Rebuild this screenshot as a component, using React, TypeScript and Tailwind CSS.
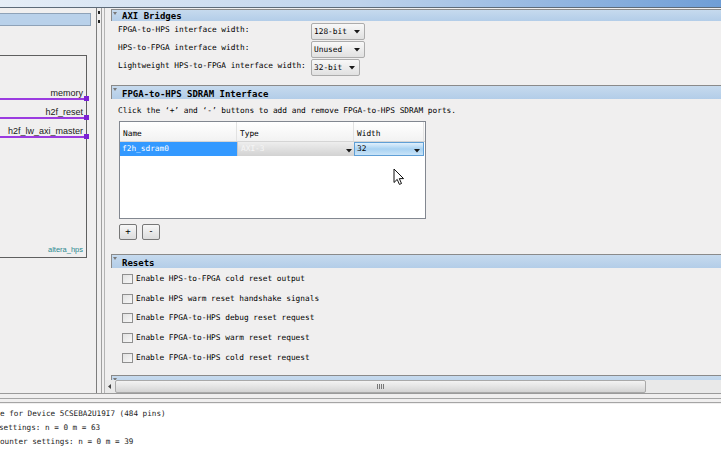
import React from "react";

const mono = "font-['DejaVu_Sans_Mono','Liberation_Mono',monospace]";

const Caret = ({ className = "" }: { className?: string }) => (
    <svg width="6" height="4" viewBox="0 0 6 4" className={className}>
        <polygon points="0,0 6,0 3,3.5" fill="#1a1a1a" />
    </svg>
);

const SectionHeader = ({ title, tall = true }: { title: string; tall?: boolean }) => (
    <div
        className={`ml-[6px] shrink-0 overflow-hidden border-t border-l border-[#8a8a8a] bg-gradient-to-b from-[#c6daee] to-[#b3cde8] flex items-start ${
            tall ? "h-[14px]" : "h-[12px]"
        }`}
    >
        <svg width="4" height="3" viewBox="0 0 4 3" className="ml-[1px] mt-[2px] shrink-0">
            <polygon points="0,0 4,0 2,3" fill="#7a7a7a" />
        </svg>
        <span
            className={`ml-[5px] text-[9px] font-bold leading-[10px] text-black ${tall ? "pt-[3px]" : "pt-[1px]"}`}
        >
            {title}
        </span>
    </div>
);

const Select = ({ value, width }: { value: string; width: string }) => (
    <div
        className={`${width} h-[17px] flex items-center justify-between pl-[2px] pr-[4px] border border-[#acacac] rounded-[2px] bg-gradient-to-b from-[#f8f8f8] to-[#e1e1e1]`}
    >
        <span>{value}</span>
        <Caret />
    </div>
);

const Port = ({ label }: { label: string }) => (
    <div className="flex flex-col">
        <div className="h-[11px] leading-[11px] text-right pr-[3px] text-[9px] text-[#1a1a1a] font-['Liberation_Sans',sans-serif]">
            {label}
        </div>
        <div className="h-[5px] -mt-[3px] flex items-center -mr-[3px]">
            <div className="flex-1 h-[2px] bg-[#9b3be0]" />
            <div className="w-[5px] h-[5px] bg-[#7b22d4]" />
        </div>
    </div>
);

const resets = [
    "Enable HPS-to-FPGA cold reset output",
    "Enable HPS warm reset handshake signals",
    "Enable FPGA-to-HPS debug reset request",
    "Enable FPGA-to-HPS warm reset request",
    "Enable FPGA-to-HPS cold reset request",
];

export default function App() {
    return (
        <div className={`w-[721px] h-[453px] overflow-hidden bg-[#f0efef] flex flex-col ${mono}`}>
            {/* title strip */}
            <div className="h-[8px] shrink-0 border-b border-[#5d6b79] bg-gradient-to-r from-[#e6eef7] via-[#bed3ec] to-[#6f9ed6]" />

            <div className="h-[386px] shrink-0 flex border-b border-[#9a9a9a]">
                {/* system view */}
                <div className="w-[97px] shrink-0 border-r border-[#7c7c7c] pt-[5px] flex flex-col">
                    <div className="h-[13px] mr-[5px] border-t border-b border-r border-[#8ea2b8] bg-[#b9d1ea]" />
                    <div className="mt-[29px] w-[87px] h-[203px] border-t border-r border-b border-[#5f5f5f] pt-[32px] flex flex-col gap-[6px]">
                        <Port label="memory" />
                        <Port label="h2f_reset" />
                        <Port label="h2f_lw_axi_master" />
                        <div className="mt-auto mb-[3px] pr-[3px] text-right text-[7.5px] leading-[9px] text-[#2b8a8f] font-['Liberation_Sans',sans-serif]">
                            altera_hps
                        </div>
                    </div>
                </div>

                {/* splitter */}
                <div className="w-[4px] shrink-0 flex flex-col items-center pt-[3px]">
                    <div className="w-[2px] h-[3px] bg-[#222]" />
                    <div className="w-[2px] h-[3px] bg-[#222] mt-[6px]" />
                </div>

                {/* parameter editor */}
                <div className="flex-1 min-w-0 border-l border-[#a0a0a0] pl-[2px] flex">
                    <div className="flex-1 min-w-0 border-l border-[#b4b4b4] flex flex-col">
                        <div className="flex-1 min-h-0 overflow-hidden flex flex-col text-[7.8px] text-black">
                            <div className="mt-[1px]">
                                <SectionHeader title="AXI Bridges" tall={false} />
                            </div>

                            <div className="mt-[1px] pl-[13px] grid grid-cols-[193px_auto] justify-start">
                                {[
                                    ["FPGA-to-HPS interface width:", "128-bit", "w-[54px]"],
                                    ["HPS-to-FPGA interface width:", "Unused", "w-[54px]"],
                                    ["Lightweight HPS-to-FPGA interface width:", "32-bit", "w-[49px]"],
                                ].map(([label, value, w]) => (
                                    <React.Fragment key={label}>
                                        <div className="h-[18px] leading-[15px] whitespace-nowrap">{label}</div>
                                        <div className="h-[18px] pt-[1px]">
                                            <Select value={value} width={w} />
                                        </div>
                                    </React.Fragment>
                                ))}
                            </div>

                            <div className="mt-[9px]">
                                <SectionHeader title="FPGA-to-HPS SDRAM Interface" />
                            </div>
                            <div className="mt-[4px] pl-[13px] leading-[15px] whitespace-nowrap">
                                Click the ‘+’ and ‘-’ buttons to add and remove FPGA-to-HPS SDRAM ports.
                            </div>

                            <div className="mt-[3px] ml-[14px] w-[307px] h-[98px] shrink-0 border border-[#828790] bg-white relative">
                                <div className="h-[20px] flex border-b border-[#d5d5d5] bg-gradient-to-b from-white to-[#f2f2f2] text-black">
                                    <div className="w-[117px] border-r border-[#e2e2e2] pl-[3px] pt-[7px] leading-[10px]">Name</div>
                                    <div className="w-[117px] border-r border-[#e2e2e2] pl-[3px] pt-[7px] leading-[10px]">Type</div>
                                    <div className="flex-1 pl-[3px] pt-[7px] leading-[10px] mr-[1px] border-r border-[#e2e2e2]">Width</div>
                                </div>
                                <div className="h-[14px] flex">
                                    <div className="w-[117px] bg-[#3399ff] text-white pl-[2px] leading-[13px]">f2h_sdram0</div>
                                    <div className="w-[117px] border-l border-[#c8c8c8] bg-gradient-to-b from-[#eeeeee] to-[#d2d2d2] flex items-center justify-between pl-[3px] pr-[2px]">
                                        <span className="text-[#f6f6f6]">AXI-3</span>
                                        <Caret className="mt-[3px]" />
                                    </div>
                                    <div className="flex-1 mr-[1px] border border-[#5f9fd6] bg-gradient-to-b from-[#e1f0fc] via-[#a8d2f2] to-[#c9e4f8] flex items-center justify-between pl-[2px] pr-[3px]">
                                        <span>32</span>
                                        <Caret className="mt-[3px]" />
                                    </div>
                                </div>
                                <svg
                                    width="12"
                                    height="18"
                                    viewBox="0 0 12 18"
                                    className="absolute left-[273px] top-[46px]"
                                >
                                    <path
                                        d="M1 1 L1 14.5 L4.2 11.4 L6.4 16.4 L8.5 15.5 L6.3 10.6 L10.6 10.6 Z"
                                        fill="#ffffff"
                                        stroke="#111111"
                                        strokeWidth="1"
                                        strokeLinejoin="round"
                                    />
                                </svg>
                            </div>

                            <div className="mt-[5px] ml-[14px] flex gap-[5px]">
                                {["+", "-"].map((b) => (
                                    <div
                                        key={b}
                                        className="w-[18px] h-[16px] flex items-center justify-center border border-[#777] rounded-[2px] bg-gradient-to-b from-[#f7f7f7] to-[#dcdcdc] text-[9px]"
                                    >
                                        {b}
                                    </div>
                                ))}
                            </div>

                            <div className="mt-[14px]">
                                <SectionHeader title="Resets" />
                            </div>
                            <div className="pt-[1px] pl-[17px] flex flex-col">
                                {resets.map((r) => (
                                    <div key={r} className="h-[19.7px] flex items-center gap-[3px] whitespace-nowrap">
                                        <div className="w-[11px] h-[10px] border border-[#8f8f8f] bg-gradient-to-br from-[#e2e2e2] to-[#f7f7f7]" />
                                        <span>{r}</span>
                                    </div>
                                ))}
                            </div>

                            <div className="mt-[7.5px]">
                                <SectionHeader title="" />
                            </div>
                        </div>

                        {/* horizontal scrollbar */}
                        <div className="h-[13px] shrink-0 flex bg-[#e9e9e9]">
                            <div className="w-[9px] flex items-center justify-center">
                                <svg width="3" height="5" viewBox="0 0 3 5">
                                    <polygon points="3,0 3,5 0,2.5" fill="#444" />
                                </svg>
                            </div>
                            <div className="ml-[1px] w-[531px] border border-[#a9a9a9] rounded-[2px] bg-gradient-to-b from-[#f3f3f3] via-[#e4e4e4] to-[#d4d4d4] flex items-center justify-center">
                                <div className="flex gap-[1px]">
                                    <div className="w-[1px] h-[5px] bg-[#777]" />
                                    <div className="w-[1px] h-[5px] bg-[#777]" />
                                    <div className="w-[1px] h-[5px] bg-[#777]" />
                                    <div className="w-[1px] h-[5px] bg-[#777]" />
                                </div>
                            </div>
                        </div>
                    </div>
                </div>
            </div>

            {/* splitter to messages */}
            <div className="h-[10px] shrink-0 pt-[4px]">
                <div className="h-[5px] border-t border-b border-[#a5a5a5]" />
            </div>

            {/* messages */}
            <div className="flex-1 bg-white pt-[3px] text-[7.65px] leading-[14px] text-[#1c1c1c] whitespace-nowrap">
                <div>e for Device 5CSEBA2U19I7 (484 pins)</div>
                <div className="-ml-[1px]">settings: n = 0 m = 63</div>
                <div>ounter settings: n = 0 m = 39</div>
            </div>
        </div>
    );
}
